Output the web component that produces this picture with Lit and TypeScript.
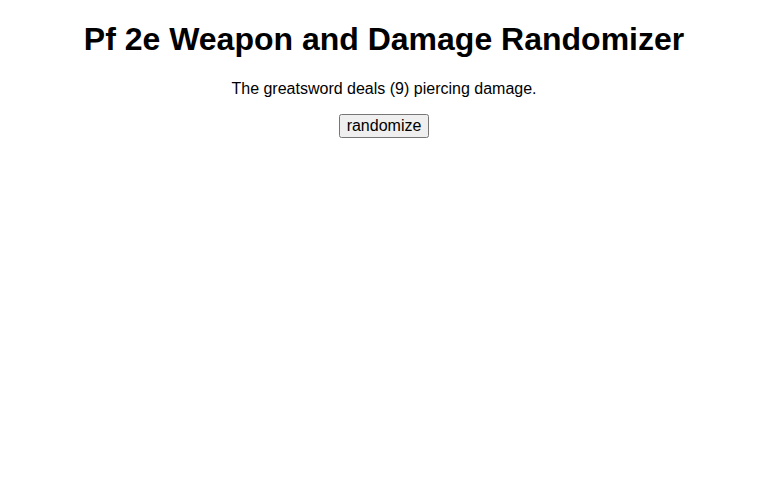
import { LitElement, html, css } from "lit";
import { customElement, state } from "lit/decorators.js";

const WEAPONS = ["greatsword", "longsword", "battle axe", "warhammer", "rapier", "spear"];
const DAMAGE_TYPES = ["piercing", "slashing", "bludgeoning"];

const pick = (items: string[]): string => items[Math.floor(Math.random() * items.length)];

@customElement("app-root")
export class AppRoot extends LitElement {
  static styles = css`
    :host {
      display: block;
      padding: 0 8px;
      background: #fff;
      color: #000;
      font-family: Arial, "Liberation Sans", sans-serif;
      font-size: 16px;
      text-align: center;
    }

    .title {
      margin: 21px 0 22px;
      font-size: 32px;
      line-height: 37px;
      font-weight: bold;
    }

    .result {
      margin: 0 0 16px;
      line-height: 18px;
    }

    .randomize {
      font: inherit;
    }
  `;

  @state() private weapon = "greatsword";
  @state() private damage = 9;
  @state() private damageType = "piercing";

  private randomize() {
    this.weapon = pick(WEAPONS);
    this.damage = 1 + Math.floor(Math.random() * 12);
    this.damageType = pick(DAMAGE_TYPES);
  }

  render() {
    return html`
      <main>
        <h1 class="title">Pf 2e Weapon and Damage Randomizer</h1>
        <p class="result" aria-live="polite">The ${this.weapon} deals (${this.damage}) ${this.damageType} damage.</p>
        <button class="randomize" type="button" @click=${this.randomize}>randomize</button>
      </main>
    `;
  }
}
